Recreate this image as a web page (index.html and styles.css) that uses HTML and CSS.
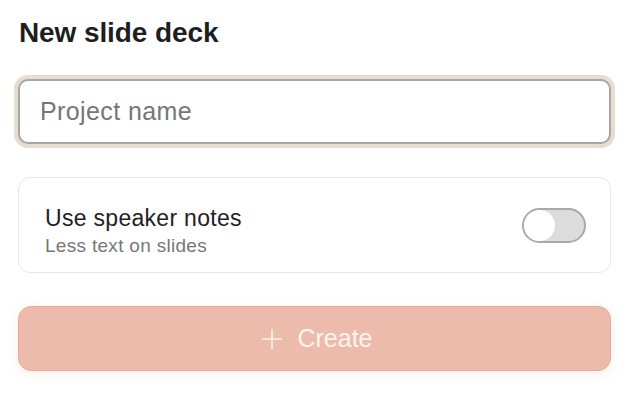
FILE: index.html
```html
<!DOCTYPE html>
<html>
<head>
<meta charset="utf-8">
<link rel="stylesheet" href="styles.css">
</head>
<body>
<main class="panel">
  <h1 class="title">New slide deck</h1>
  <input class="name-input" type="text" placeholder="Project name">
  <div class="option-card">
    <div class="option-text">
      <div class="option-label">Use speaker notes</div>
      <div class="option-sub">Less text on slides</div>
    </div>
    <span class="toggle"><span class="knob"></span></span>
  </div>
  <button class="create-btn" type="button">
    <svg class="plus" width="24" height="24" viewBox="0 0 24 24" fill="none" stroke="currentColor" stroke-width="1.6" stroke-linecap="round"><path d="M12 2.5v19M2.5 12h19"/></svg>
    <span>Create</span>
  </button>
</main>
</body>
</html>
```
FILE: styles.css
```css
* { box-sizing: border-box; }
html, body { margin: 0; background: #ffffff; }
body {
  font-family: "Liberation Sans", Arial, Helvetica, sans-serif;
  width: 642px;
  height: 400px;
  overflow: hidden;
}
.panel {
  display: flex;
  flex-direction: column;
  padding: 17px 31px 0 18px;
}
.title {
  margin: 0 0 0 1px;
  font-size: 28px;
  line-height: 32px;
  font-weight: 700;
  color: #1e1e1e;
  letter-spacing: -0.1px;
}
.name-input {
  margin-top: 30px;
  width: 100%;
  height: 65px;
  border: 2px solid #a7a7a7;
  border-radius: 10px;
  box-shadow: 0 0 0 4px #e6ddcf;
  padding: 0 0 0 20px;
  font-family: inherit;
  font-size: 25px;
  letter-spacing: 0.4px;
  color: #222;
  outline: none;
  background: #fff;
}
.name-input::placeholder { color: #767676; opacity: 1; }
.option-card {
  margin-top: 33px;
  display: flex;
  align-items: flex-start;
  justify-content: space-between;
  border: 1px solid #e6e6e6;
  border-radius: 12px;
  padding: 27px 24px 15px 26px;
  background: #fff;
}
.option-text { display: flex; flex-direction: column; }
.option-label {
  font-size: 23px;
  line-height: 27px;
  color: #222;
  letter-spacing: 0.3px;
}
.option-sub {
  margin-top: 2px;
  font-size: 19px;
  line-height: 23px;
  color: #777;
  letter-spacing: 0.3px;
}
.toggle {
  margin-top: 3px;
  position: relative;
  width: 64px;
  height: 35px;
  border-radius: 18px;
  background: #dcdcdc;
  border: 2px solid #a9a9a9;
}
.knob {
  position: absolute;
  left: 0;
  top: 0;
  width: 31px;
  height: 31px;
  border-radius: 50%;
  background: #fff;
}
.create-btn {
  margin-top: 33px;
  width: 100%;
  height: 65px;
  display: flex;
  align-items: center;
  justify-content: center;
  gap: 13px;
  border: 1px solid #e3ab9c;
  border-radius: 13px;
  background: #ecbbab;
  color: #fdf3ee;
  font-family: inherit;
  font-size: 25px;
  box-shadow: 0 3px 12px rgba(225, 160, 135, 0.18);
  padding: 0 0 0 4px;
}
.plus { display: block; }
```
